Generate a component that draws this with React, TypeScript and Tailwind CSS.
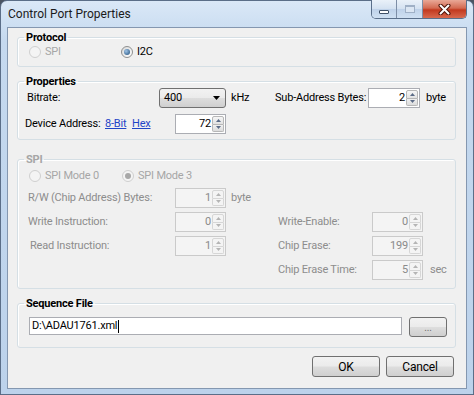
import React from 'react';

const btnFace = 'bg-[linear-gradient(#f2f2f2,#ebebeb_48%,#dddddd_52%,#cfcfcf)] border border-[#707070] rounded-[3px]';

const Arrow = ({ up, color }: { up?: boolean; color: string }) => (
    <svg width="5" height="3" viewBox="0 0 5 3">
        <path d={up ? 'M0 3L2.5 0L5 3z' : 'M0 0h5L2.5 3z'} fill={color} />
    </svg>
);

const Radio = ({ label, checked, disabled, width }: { label: string; checked?: boolean; disabled?: boolean; width?: string }) => (
    <div className={`flex items-center gap-[4px] shrink-0 ${width ?? ''}`}>
        <span
            className={`w-[12px] h-[12px] rounded-full border flex items-center justify-center ${
                disabled
                    ? 'border-[#cfcfcf] bg-[#f4f4f4]'
                    : 'border-[#8e8f8f] bg-[linear-gradient(135deg,#d9d9d9,#ffffff)]'
            }`}
        >
            {checked && (
                <span
                    className={`w-[6px] h-[6px] rounded-full ${
                        disabled ? 'bg-[#a8a8a8]' : 'bg-[radial-gradient(circle_at_35%_35%,#9fc3e6,#1e4d7a)]'
                    }`}
                />
            )}
        </span>
        <span className={disabled ? 'text-[#a6a6a6]' : 'text-black'}>{label}</span>
    </div>
);

const Spinner = ({ value, disabled, w = 'w-[51px]' }: { value: string; disabled?: boolean; w?: string }) => (
    <div
        className={`flex shrink-0 h-[20px] ${w} border ${
            disabled ? 'border-[#cacaca] bg-[#f4f4f4] text-[#8a8a8a]' : 'border-[#abadb3] bg-white text-black'
        }`}
    >
        <span className="flex-1 text-right pr-[1px] leading-[18px]">{value}</span>
        <div className="flex flex-col w-[13px] py-[1px] pr-[1px]">
            <div
                className={`flex-1 flex items-center justify-center border rounded-t-[2px] ${
                    disabled ? 'border-[#d6d6d6] bg-[#f4f4f4]' : 'border-[#b7b7b7] bg-[linear-gradient(#f6f6f6,#e2e2e2)]'
                }`}
            >
                <Arrow up color={disabled ? '#b4b4b4' : '#5b6b86'} />
            </div>
            <div
                className={`flex-1 flex items-center justify-center border border-t-0 rounded-b-[2px] ${
                    disabled ? 'border-[#d6d6d6] bg-[#f4f4f4]' : 'border-[#b7b7b7] bg-[linear-gradient(#f0f0f0,#dcdcdc)]'
                }`}
            >
                <Arrow color={disabled ? '#b4b4b4' : '#5b6b86'} />
            </div>
        </div>
    </div>
);

const Group = ({ title, disabled, className, children }: { title: string; disabled?: boolean; className: string; children: React.ReactNode }) => (
    <fieldset
        className={`ml-[9px] w-[439px] border border-[#d5dfe5] rounded-[3px] shadow-[inset_1px_1px_0_#ffffff] ${className}`}
    >
        <legend className={`ml-[6px] px-[2px] font-bold leading-[14px] ${disabled ? 'text-[#a6a6a6]' : 'text-black'}`}>
            <span className="relative top-[1px]">{title}</span>
        </legend>
        {children}
    </fieldset>
);

export default function App() {
    return (
        <div className="w-[474px] h-[395px] bg-[#4b5563] font-['Roboto','Liberation_Sans',sans-serif] text-[11px] tracking-[-0.2px] whitespace-nowrap">
            <div className="w-full h-full flex flex-col rounded-t-[7px] border border-[#5b6e88] bg-[linear-gradient(180deg,#dae8f7,#c5d9ef_40px,#bcd2eb)]">
                {/* title bar */}
                <div className="h-[26px] flex justify-between items-start">
                    <span className="pl-[7px] pt-[6px] text-[12px] leading-[15px] tracking-normal text-[#1b1b1b]">Control Port Properties</span>
                    <div className="mr-[6px] -mt-px flex h-[19px] border border-t-0 border-[#5a6f8a] rounded-b-[5px] overflow-hidden">
                        <div className="w-[25px] h-full flex items-end justify-center pb-[4px] bg-[linear-gradient(#eaf1f9,#d3e1f1_50%,#bfd2e9_52%,#cfe0f2)] border-r border-[#7d8ea6]">
                            <span className="w-[10px] h-[4px] bg-white border border-[#3f5067] rounded-[1px]" />
                        </div>
                        <div className="w-[26px] h-full flex items-center justify-center bg-[linear-gradient(#eaf1f9,#d3e1f1_50%,#bfd2e9_52%,#cfe0f2)] border-r border-[#7d8ea6]">
                            <span className="w-[10px] h-[8px] border border-[#9fb0c6] border-t-[2px] bg-[#dbe6f3]" />
                        </div>
                        <div className="w-[43px] h-full flex items-center justify-center bg-[linear-gradient(#e9a897,#d36a52_45%,#c2391f_55%,#d8694e)]">
                            <svg width="13" height="11" viewBox="0 0 13 11">
                                <path d="M2.5 1.5L10.5 9.5M10.5 1.5L2.5 9.5" stroke="#4e1409" strokeWidth="4" strokeLinecap="round" />
                                <path d="M2.5 1.5L10.5 9.5M10.5 1.5L2.5 9.5" stroke="#ffffff" strokeWidth="2" strokeLinecap="round" />
                            </svg>
                        </div>
                    </div>
                </div>

                {/* client area */}
                <div className="mx-[6px] mb-[5px] flex-1 border border-[#8497b0] bg-[#f0f0f0] pt-[2px] flex flex-col">
                    <Group title="Protocol" className="h-[37px]">
                        <div className="flex items-center h-[14px] mt-[1px] pl-[11px]">
                            <Radio label="SPI" disabled width="w-[92px]" />
                            <Radio label="I2C" checked />
                        </div>
                    </Group>

                    <Group title="Properties" className="h-[66px] mt-[7px]">
                        <div className="flex items-center h-[20px] pl-[9px]">
                            <span className="w-[132px] shrink-0">Bitrate:</span>
                            <div className={`flex shrink-0 items-center h-[20px] w-[67px] pl-[4px] pr-[5px] ${btnFace}`}>
                                <span className="flex-1">400</span>
                                <svg width="7" height="4" viewBox="0 0 7 4">
                                    <path d="M0 0h7L3.5 4z" fill="#000" />
                                </svg>
                            </div>
                            <span className="ml-[5px] w-[44px] shrink-0">kHz</span>
                            <span className="w-[93px] shrink-0">Sub-Address Bytes:</span>
                            <Spinner value="2" w="w-[52px]" />
                            <span className="ml-[6px]">byte</span>
                        </div>
                        <div className="flex items-center h-[20px] mt-[6px] pl-[7px]">
                            <span className="w-[80px] shrink-0">Device Address:</span>
                            <span className="w-[27px] shrink-0 text-[#1f45c7] underline">8-Bit</span>
                            <span className="w-[43px] shrink-0 text-[#1f45c7] underline">Hex</span>
                            <Spinner value="72" />
                        </div>
                    </Group>

                    <Group title="SPI" disabled className="h-[137px] mt-[12px]">
                        <div className="flex items-center h-[14px] mt-[3px] pl-[11px]">
                            <Radio label="SPI Mode 0" disabled width="w-[93px]" />
                            <Radio label="SPI Mode 3" checked disabled />
                        </div>
                        <div className="flex items-center h-[20px] mt-[5px] pl-[10px] text-[#8d8d8d]">
                            <span className="w-[147px] shrink-0">R/W (Chip Address) Bytes:</span>
                            <Spinner value="1" disabled />
                            <span className="ml-[5px]">byte</span>
                        </div>
                        <div className="flex items-center h-[20px] mt-[4px] pl-[10px] text-[#8d8d8d]">
                            <span className="w-[147px] shrink-0">Write Instruction:</span>
                            <Spinner value="0" disabled />
                            <span className="ml-[52px] w-[94px] shrink-0">Write-Enable:</span>
                            <Spinner value="0" disabled />
                        </div>
                        <div className="flex items-center h-[20px] mt-[4px] pl-[10px] text-[#8d8d8d]">
                            <span className="w-[147px] shrink-0 pl-[2px]">Read Instruction:</span>
                            <Spinner value="1" disabled />
                            <span className="ml-[52px] w-[94px] shrink-0">Chip Erase:</span>
                            <Spinner value="199" disabled />
                        </div>
                        <div className="flex items-center h-[20px] mt-[4px] pl-[260px] text-[#8d8d8d]">
                            <span className="w-[94px] shrink-0">Chip Erase Time:</span>
                            <Spinner value="5" disabled />
                            <span className="ml-[7px]">sec</span>
                        </div>
                    </Group>

                    <Group title="Sequence File" className="h-[52px] mt-[7px]">
                        <div className="flex items-start mt-[7px] pl-[11px]">
                            <div className="w-[373px] h-[18px] border border-[#abadb3] bg-white flex items-center pl-[2px]">
                                <span>D:\ADAU1761.xml</span>
                                <span className="w-px h-[13px] bg-black ml-px" />
                            </div>
                            <div className={`ml-[7px] w-[38px] h-[20px] flex items-center justify-center text-[#6d6d6d] text-[10px] ${btnFace}`}>
                                ...
                            </div>
                        </div>
                    </Group>

                    <div className="flex justify-end gap-[6px] pr-[12px] mt-[8px]">
                        <div className={`w-[68px] h-[21px] flex items-center justify-center text-[12px] ${btnFace}`}>OK</div>
                        <div className={`w-[68px] h-[21px] flex items-center justify-center text-[12px] ${btnFace}`}>Cancel</div>
                    </div>
                </div>
            </div>
        </div>
    );
}
